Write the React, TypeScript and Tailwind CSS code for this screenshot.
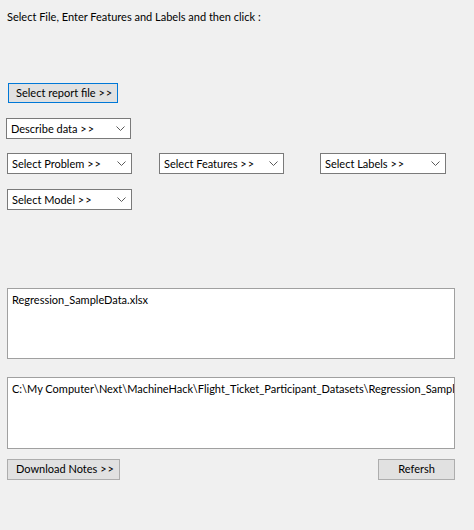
import React from "react";

const font = { fontFamily: 'Lato, "Noto Sans", sans-serif' };

function Chevron() {
  return (
    <svg width="9" height="5" viewBox="0 0 9 5" className="shrink-0">
      <path d="M0.5 0.5 L4.5 4.5 L8.5 0.5" fill="none" stroke="#5a5a5a" strokeWidth="1" />
    </svg>
  );
}

function Gt() {
  return <span className="tracking-[1px]">&gt;&gt;</span>;
}

function Combo({ label, className = "" }: { label: string; className?: string }) {
  return (
    <div
      className={`h-[21px] bg-white border border-[#7a7a7a] flex items-center justify-between pl-[4px] pr-[5px] text-[11px] text-black whitespace-nowrap ${className}`}
    >
      <span className="leading-none">
        {label} <Gt />
      </span>
      <Chevron />
    </div>
  );
}

export default function App() {
  return (
    <div className="w-[474px] h-[530px] bg-[#f0f0f0] text-black flex flex-col pl-[7px]" style={font}>
      <div className="mt-[9px] text-[11px] leading-[16px] whitespace-nowrap">Select File, Enter Features and Labels and then click :</div>
      <div className="mt-[58px] w-[110px] h-[20px] bg-[#e1e1e1] border border-[#0078d7] flex items-center pl-[7px] text-[11px] ml-[1px] whitespace-nowrap">
        Select report file&nbsp;<Gt />
      </div>
      <Combo label="Describe data" className="mt-[15px] w-[125px] -ml-[1px]" />
      <div className="mt-[14px] flex">
        <Combo label="Select Problem" className="w-[125px]" />
        <Combo label="Select Features" className="w-[125px] ml-[27px]" />
        <Combo label="Select Labels" className="w-[126px] ml-[36px]" />
      </div>
      <Combo label="Select Model" className="mt-[15px] w-[125px]" />
      <div className="mt-[78px] w-[448px] h-[71px] bg-white border border-[#a0a0a0] px-[4px] pt-[3px] text-[11px] leading-[16px] overflow-hidden whitespace-nowrap">
        Regression_SampleData.xlsx
      </div>
      <div className="mt-[18px] w-[448px] h-[72px] bg-white border border-[#a0a0a0] px-[4px] pt-[3px] text-[11px] leading-[16px] overflow-hidden whitespace-nowrap">
        C:\My Computer\Next\MachineHack\Flight_Ticket_Participant_Datasets\Regression_SampleData.xlsx
      </div>
      <div className="mt-[10px] flex w-[448px] justify-between">
        <div className="w-[113px] h-[21px] bg-[#e1e1e1] border border-[#adadad] flex items-center pl-[8px] text-[11px] whitespace-nowrap">
          Download Notes&nbsp;<Gt />
        </div>
        <div className="w-[77px] h-[21px] bg-[#e1e1e1] border border-[#adadad] flex items-center justify-center text-[11px]">
          Refersh
        </div>
      </div>
    </div>
  );
}
